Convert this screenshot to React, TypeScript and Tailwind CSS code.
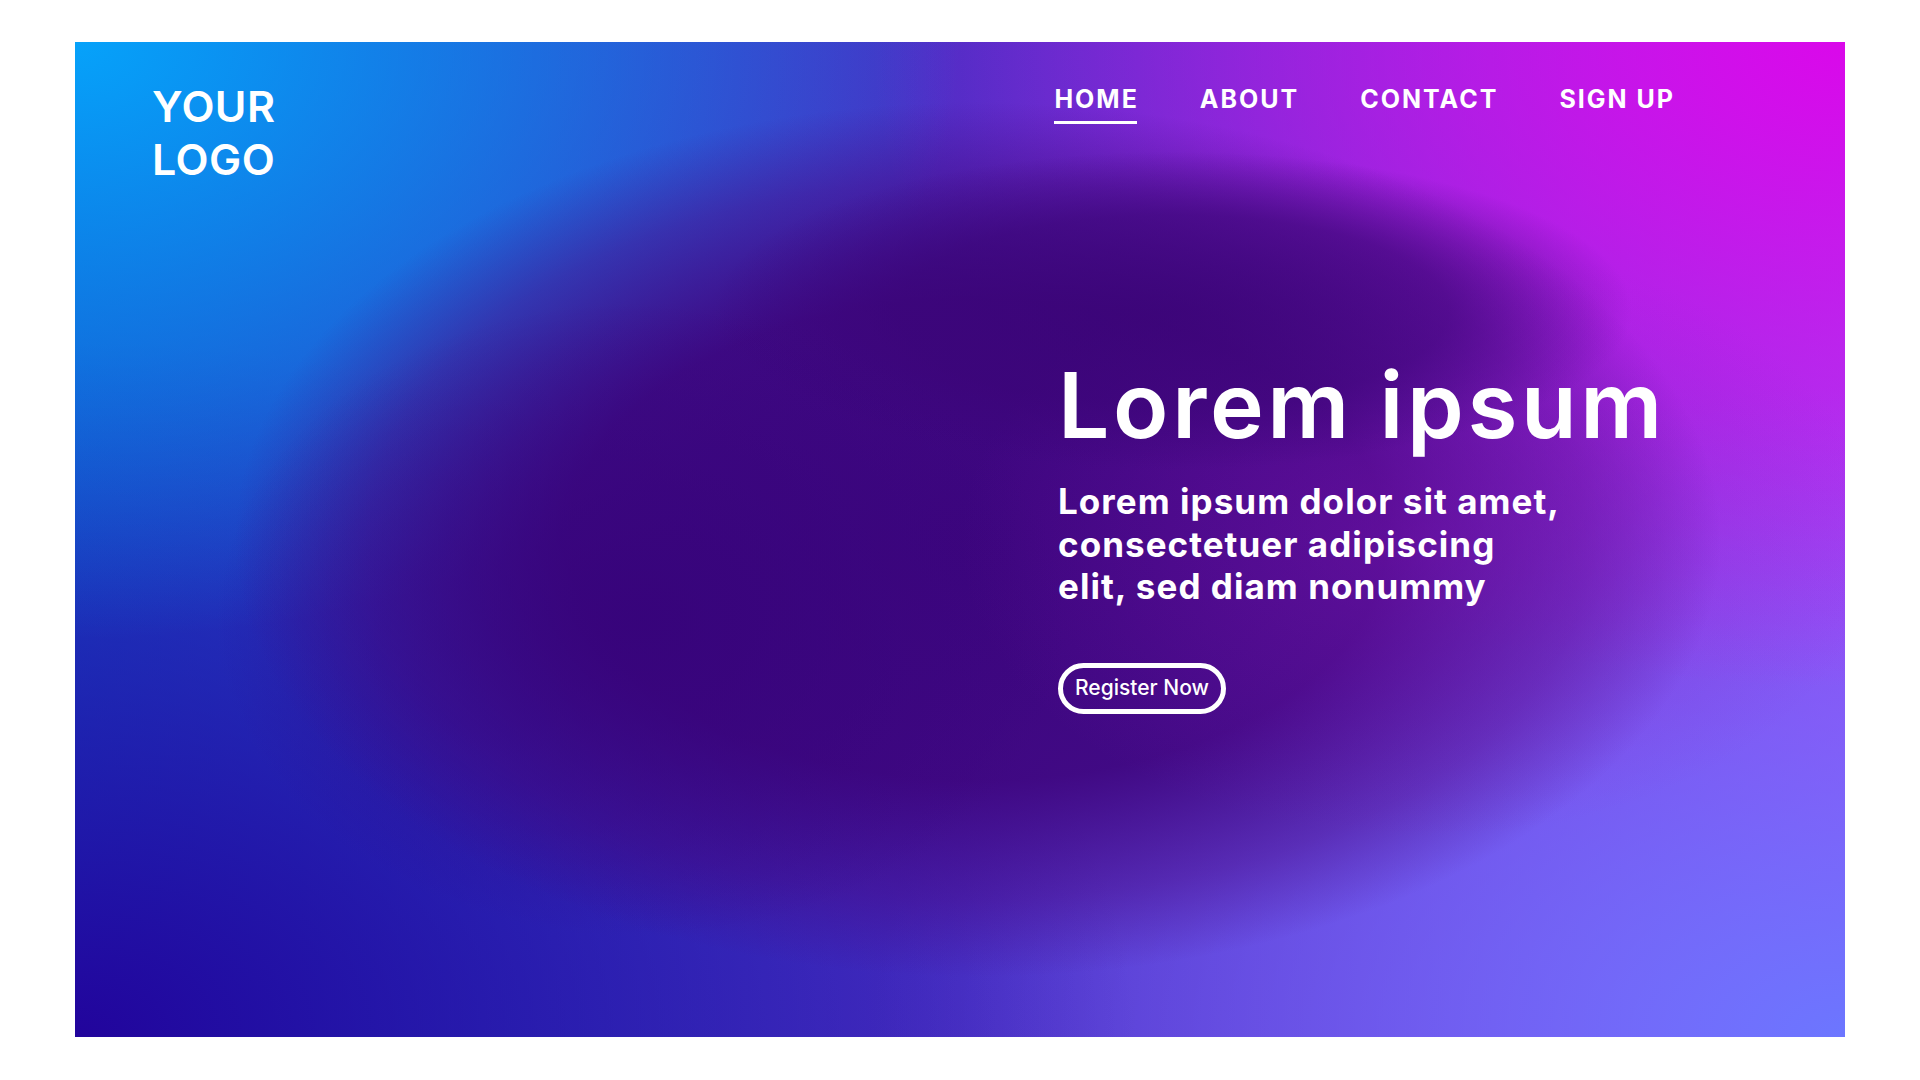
import React from "react";

const font = { fontFamily: "Inter, 'Noto Sans', sans-serif" };

export default function App() {
  const nav = ["HOME", "ABOUT", "CONTACT", "SIGN UP"];
  return (
    <div className="w-full h-[1080px] bg-white pt-[42px] pl-[75px]" style={font}>
      <div className="w-[1770px] h-[995px] flex flex-col text-white bg-[radial-gradient(ellipse_24%_32%_at_32%_58%,rgba(54,3,122,0.85)_0%,rgba(54,3,122,0)_100%),radial-gradient(ellipse_26%_16%_at_62%_27%,rgba(58,4,118,0.8)_0%,rgba(58,4,118,0.6)_60%,rgba(58,4,118,0)_100%),radial-gradient(ellipse_26%_30%_at_76%_50%,rgba(140,24,190,0.4)_0%,rgba(140,24,190,0)_100%),radial-gradient(ellipse_42%_44%_at_51%_50%,rgba(60,4,124,0.97)_0%,rgba(62,4,124,0.9)_55%,rgba(70,6,130,0.45)_82%,rgba(70,6,130,0)_100%),radial-gradient(ellipse_50%_60%_at_0%_0%,#06a2fa_0%,rgba(6,162,250,0)_100%),radial-gradient(ellipse_55%_65%_at_100%_0%,#da08ea_0%,rgba(218,8,234,0)_100%),radial-gradient(ellipse_60%_70%_at_0%_100%,#22049c_0%,rgba(34,4,156,0)_100%),radial-gradient(ellipse_55%_65%_at_100%_100%,#6c76ff_0%,rgba(108,118,255,0)_100%),linear-gradient(to_right,#1848c8,#4a30c4,#9a44f0)]">
        <header className="flex items-start justify-between pl-[77px] pr-[170px] pt-[38px]">
          <div className="text-[43px] leading-[53px] font-semibold tracking-[0.01em]">
            <div>YOUR</div>
            <div>LOGO</div>
          </div>
          <nav className="flex gap-[61px] mt-[5px]">
            {nav.map((n, i) => (
              <div key={n} className="flex flex-col items-stretch">
                <span className="text-[25px] leading-[28px] font-bold tracking-[0.08em]">{n}</span>
                {i === 0 && <span className="mt-[8px] h-[3px] bg-white mr-[2px]" />}
              </div>
            ))}
          </nav>
        </header>
        <section className="pl-[983px] mt-[174px] flex flex-col items-start">
          <h1 className="text-[91px] leading-[90px] font-semibold tracking-[0.04em]">Lorem ipsum</h1>
          <p className="mt-[30px] text-[35px] leading-[42.5px] font-bold tracking-[0.03em]">
            Lorem ipsum dolor sit amet,
            <br />
            consectetuer adipiscing
            <br />
            elit, sed diam nonummy
          </p>
          <button className="mt-[55px] w-[168px] h-[51px] rounded-full border-[5px] border-white text-[21px] font-medium flex items-center justify-center">
            Register Now
          </button>
        </section>
      </div>
    </div>
  );
}
